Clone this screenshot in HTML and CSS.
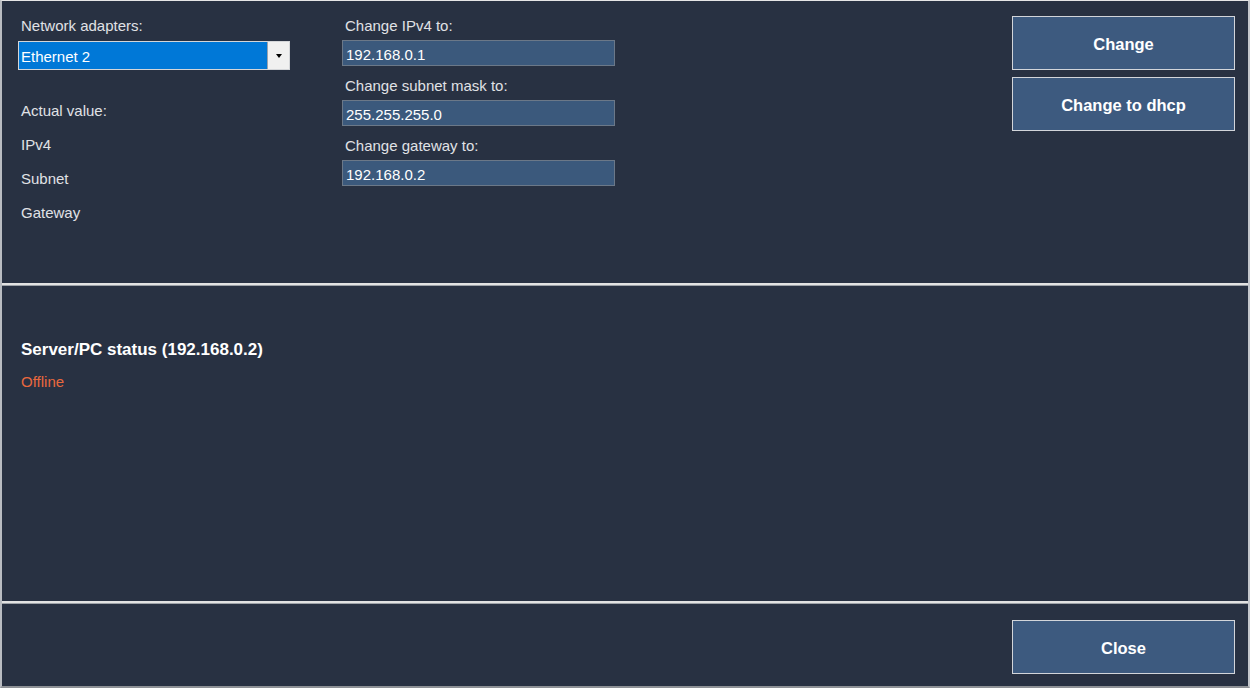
FILE: index.html
```html
<!DOCTYPE html>
<html lang="en">
<head>
<meta charset="utf-8">
<title>Network settings</title>
<link rel="stylesheet" href="styles.css">
</head>
<body>
<div class="window">
  <section class="panel panel-top">
    <div class="col col-left">
      <div class="label">Network adapters:</div>
      <div class="combo">
        <div class="combo-value">Ethernet 2</div>
        <div class="combo-btn"><span class="arrow"></span></div>
      </div>
      <div class="label actual">Actual value:</div>
      <div class="label row">IPv4</div>
      <div class="label row">Subnet</div>
      <div class="label row">Gateway</div>
    </div>
    <div class="col col-mid">
      <div class="label">Change IPv4 to:</div>
      <div class="field">192.168.0.1</div>
      <div class="label gap">Change subnet mask to:</div>
      <div class="field">255.255.255.0</div>
      <div class="label gap">Change gateway to:</div>
      <div class="field">192.168.0.2</div>
    </div>
    <div class="col col-right">
      <button class="btn">Change</button>
      <button class="btn">Change to dhcp</button>
    </div>
  </section>
  <div class="sep"></div>
  <section class="panel panel-mid">
    <div class="status-title">Server/PC status (192.168.0.2)</div>
    <div class="status-value">Offline</div>
  </section>
  <div class="sep"></div>
  <section class="panel panel-bottom">
    <button class="btn">Close</button>
  </section>
</div>
</body>
</html>
```

FILE: styles.css
```css
* { box-sizing: border-box; }
html, body {
  margin: 0;
  padding: 0;
  background: #283142;
}
body {
  font-family: "Liberation Sans", Arial, sans-serif;
  font-size: 15px;
  color: #e0e2e6;
}
.window {
  width: 1250px;
  height: 688px;
  display: flex;
  flex-direction: column;
  border-top: 1px solid #e6e6e6;
  border-left: 2px solid #b9bcc1;
  border-right: 2px solid #c4c7cc;
  border-bottom: 2px solid #8e9196;
  background: #283142;
}
.panel { background: #283142; }
.panel-top {
  height: 282px;
  display: flex;
  padding: 15px 13px 0 16px;
}
.sep {
  height: 3px;
  flex: none;
  background: #e2e2e2;
  border-bottom: 1px solid #9ea2a8;
}
.panel-mid {
  height: 315px;
  padding: 54px 0 0 19px;
}
.panel-bottom {
  flex: 1;
  display: flex;
  justify-content: flex-end;
  padding: 16px 13px 0 0;
}
.col { display: flex; flex-direction: column; }
.col-left { width: 272px; }
.col-mid { width: 273px; margin-left: 52px; }
.col-right { margin-left: auto; gap: 7px; }
.label {
  line-height: 19px;
  height: 17px;
  padding-left: 3px;
  white-space: nowrap;
}
.combo {
  margin-top: 8px;
  height: 29px;
  display: flex;
  border: 1px solid #d4d6d9;
  background: #f0f0f0;
}
.combo-value {
  flex: 1;
  background: #0078d7;
  color: #ffffff;
  line-height: 30px;
  padding-left: 2px;
  border-right: 1px solid #9aa3ad;
}
.combo-btn {
  width: 21px;
  display: flex;
  align-items: center;
  justify-content: center;
  background: #f0f0f0;
}
.arrow {
  width: 0;
  height: 0;
  border-left: 3.5px solid transparent;
  border-right: 3.5px solid transparent;
  border-top: 4px solid #000;
  margin-top: 1px;
}
.actual { margin-top: 31px; }
.row { margin-top: 17px; }
.field {
  margin-top: 7px;
  height: 26px;
  line-height: 25px;
  padding: 1px 0 0 3px;
  background: #3b597c;
  border: 1px solid #6b7888;
  color: #ffffff;
}
.gap { margin-top: 10px; }
.btn {
  width: 223px;
  height: 54px;
  background: #3d5a7f;
  border: 1px solid #d2d5da;
  color: #ffffff;
  font-family: "Liberation Sans", Arial, sans-serif;
  font-weight: bold;
  font-size: 16.5px;
  padding: 2px 0 0 0;
  margin: 0;
  cursor: pointer;
}
.status-title {
  font-weight: bold;
  font-size: 17px;
  line-height: 20px;
  color: #ffffff;
}
.status-value {
  margin-top: 13px;
  line-height: 17px;
  color: #e8683e;
}
```
